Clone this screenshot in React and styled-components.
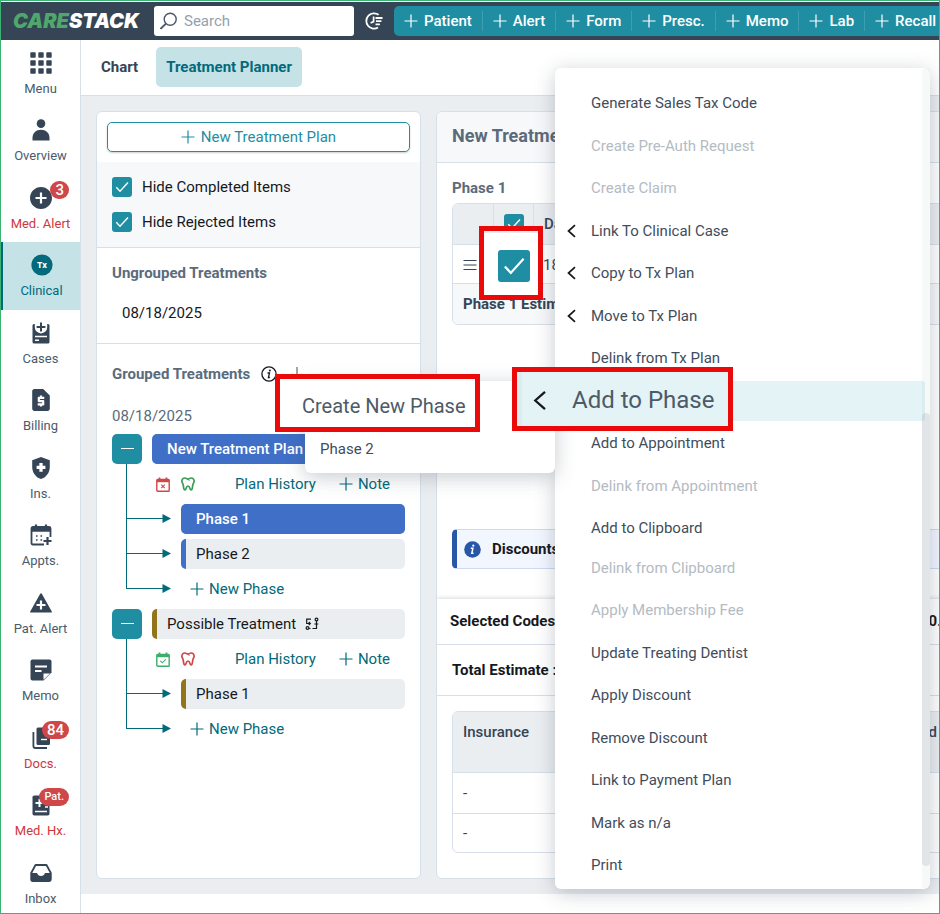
import React from 'react';
import styled, { createGlobalStyle, css } from 'styled-components';
import { MdAddCircle, MdRequestPage, MdHealthAndSafety } from 'react-icons/md';

const GlobalStyle = createGlobalStyle`
  * {
    box-sizing: border-box;
  }

  body {
    margin: 0;
    font-family: Roboto, 'Liberation Sans', sans-serif;
    font-size: 15px;
    line-height: 20px;
    color: #354556;
    background: #fff;
  }

  button, input {
    font: inherit;
    color: inherit;
  }

  button {
    background: none;
    border: none;
    padding: 0;
    cursor: pointer;
  }

  ul {
    list-style: none;
    margin: 0;
    padding: 0;
  }

  svg {
    display: block;
    flex: none;
  }
`;

const Page = styled.div`
  position: relative;
  display: flex;
  flex-direction: column;
  height: 100vh;
  padding-top: 1px;
  border: 1px solid #3cb371;
  overflow: hidden;
`;

/* ---------- top bar ---------- */

const TopBar = styled.header`
  display: flex;
  align-items: center;
  flex: none;
  height: 38px;
  padding-left: 12px;
  background: #354556;
`;

const Logo = styled.a`
  width: 141px;
  font-family: Inter, sans-serif;
  font-size: 20px;
  font-weight: 900;
  font-style: italic;
  color: #fff;
  text-decoration: none;

  span {
    color: #4fa76b;
  }
`;

const SearchBox = styled.label`
  display: flex;
  align-items: center;
  gap: 7px;
  width: 200px;
  height: 30px;
  padding: 0 6px;
  background: #fff;
  border-radius: 3px;
  color: #4b5a69;

  input {
    flex: 1;
    min-width: 0;
    border: none;
    outline: none;
    padding: 0;
    background: none;
  }

  input::placeholder {
    color: #93a1ae;
    opacity: 1;
  }
`;

const ClockButton = styled.button`
  margin: 0 11px;
  color: #fff;
`;

const QuickActions = styled.nav`
  display: flex;
  align-items: center;
  flex: 1;
  min-width: 0;
  height: 30px;
  background: #1f8ea3;
  border-radius: 5px 0 0 5px;
  overflow: hidden;
`;

const QuickAction = styled.button`
  display: flex;
  align-items: center;
  gap: 6px;
  flex: none;
  height: 20px;
  padding: 0 10px;
  color: #fff;
  font-weight: 500;

  & + & {
    border-left: 1px solid #3f9fb1;
  }
`;

/* ---------- sidebar ---------- */

const Body = styled.div`
  display: flex;
  flex: 1;
  min-height: 0;
`;

const Sidebar = styled.nav`
  flex: none;
  width: 80px;
  border-right: 1px solid #d7dfe8;
  overflow: hidden;
`;

const NavItem = styled.li`
  position: relative;
  height: 67px;

  &:nth-child(even) {
    height: 68px;
  }
`;

const NavLink = styled.a`
  display: flex;
  flex-direction: column;
  align-items: center;
  gap: 7px;
  height: 100%;
  padding-top: 12px;
  font-size: 13px;
  font-weight: 400;
  line-height: 16px;
  text-decoration: none;
  color: ${({ $alert }) => ($alert ? '#d0373b' : '#4b5b6c')};

  svg {
    color: #354556;
  }

  ${({ $active }) => $active && css`
    background: #c5e2e7;
    border-left: 2px solid #026a7a;
    color: #026a7a;

    svg {
      color: #026a7a;
    }
  `}
`;

const Badge = styled.span`
  position: absolute;
  top: 6px;
  right: 11px;
  min-width: 18px;
  height: 18px;
  padding: 0 5px;
  border-radius: 9px;
  background: #d0474a;
  color: #fff;
  font-size: ${({ $small }) => ($small ? '11px' : '15px')};
  font-weight: 500;
  line-height: 18px;
  text-align: center;
`;

/* ---------- main area ---------- */

const Main = styled.main`
  display: flex;
  flex-direction: column;
  flex: 1;
  min-width: 0;
  padding-bottom: 19px;
`;

const Tabs = styled.div`
  display: flex;
  gap: 8px;
  flex: none;
  padding: 7px 10px 8px;
  border-bottom: 1px solid #d7dfe8;
`;

const Tab = styled.button`
  height: 40px;
  padding: 0 10px;
  border-radius: 5px;
  font-weight: 700;
  color: ${({ $active }) => ($active ? '#026a7a' : '#354556')};
  background: ${({ $active }) => ($active ? '#c5e2e7' : 'none')};
`;

const Workspace = styled.div`
  display: flex;
  gap: 15px;
  flex: 1;
  min-height: 0;
  padding: 15px 0 15px 15px;
  background: #ebeef1;
  overflow: hidden;
`;

const Card = styled.section`
  display: flex;
  flex-direction: column;
  flex: ${({ $wide }) => ($wide ? '1 0 600px' : '0 0 325px')};
  background: #fff;
  border: 1px solid #d7dfe8;
  border-radius: 6px;
  overflow: hidden;
`;

const NewPlanBar = styled.div`
  padding: 10px;
`;

const NewPlanButton = styled.button`
  display: flex;
  align-items: center;
  justify-content: center;
  gap: 6px;
  width: 100%;
  height: 30px;
  border: 1px solid #1f8ea3;
  border-radius: 5px;
  color: #1f8ea3;
  box-shadow: 0 1px 2px rgba(0, 0, 0, 0.2);
`;

const Filters = styled.div`
  display: flex;
  flex-direction: column;
  gap: 15px;
  padding: 15px;
  background: #f7f8fa;
  border-bottom: 1px solid #d7dfe8;
`;

const FilterLabel = styled.label`
  display: flex;
  gap: 10px;
  color: #15191d;
`;

const CheckWrap = styled.span`
  display: grid;
  width: ${({ $size }) => $size}px;
  height: ${({ $size }) => $size}px;

  input, svg {
    grid-area: 1 / 1;
    width: 100%;
    height: 100%;
    margin: 0;
  }

  input {
    appearance: none;
    border-radius: 3px;
    background: #1f8ea3;
  }

  svg {
    pointer-events: none;
    color: #fff;
  }
`;

const Ungrouped = styled.div`
  display: flex;
  flex-direction: column;
  gap: 20px;
  padding: 15px 15px 20px;
  border-bottom: 1px solid #d7dfe8;
`;

const Heading = styled.h2`
  display: flex;
  align-items: center;
  margin: 0;
  font-size: 15px;
  font-weight: 700;
  line-height: 20px;
  color: #5b6b7c;
`;

const HeadingIcon = styled.span`
  margin-left: 11px;
  color: #15191d;
`;

const PlanDate = styled.div`
  padding-left: 10px;
  color: #15191d;
`;

const Grouped = styled.div`
  padding: 20px 15px;
`;

const GroupDate = styled.div`
  margin: 22px 0 8px;
  color: #5b6b7c;
`;

/* ---------- plan tree ---------- */

const Plan = styled.div`
  margin-bottom: 5px;
  color: #026a7a;
`;

const PlanHead = styled.div`
  display: flex;
  gap: 10px;
`;

const Toggle = styled.button`
  display: grid;
  place-items: center;
  width: 30px;
  height: 30px;
  border-radius: 5px;
  background: #1f8ea3;
  color: #fff;
`;

const colors = { blue: '#3f6fc7', gold: '#92741b' };

const Bar = styled.button`
  display: flex;
  align-items: center;
  gap: 9px;
  flex: 1;
  height: 30px;
  padding-left: 10px;
  border-left: 5px solid ${({ $tone }) => colors[$tone]};
  border-radius: 5px;
  background: ${({ $tone, $selected }) => ($selected ? colors[$tone] : '#ebeef1')};
  color: ${({ $selected }) => ($selected ? '#fff' : '#15191d')};
  font-weight: ${({ $selected }) => ($selected ? 500 : 400)};
`;

const TreeRow = styled.div`
  display: flex;
  height: 35px;

  > svg:first-child {
    margin-right: ${({ $tools }) => ($tools ? '-25px' : '0')};
  }
`;

const RowBody = styled.div`
  display: flex;
  align-items: center;
  flex: 1;
  padding-top: 5px;
`;

const Tools = styled(RowBody)`
  gap: 11px;
  padding-right: 15px;
`;

const TextButton = styled.button`
  display: flex;
  align-items: center;
  gap: 5px;
  color: #026a7a;
  margin-left: ${({ $push }) => ($push ? 'auto' : '0')};
`;

const NoteButton = styled(TextButton)`
  margin-left: 12px;
`;

const NewPhaseButton = styled(TextButton)`
  margin-left: 9px;
`;

/* ---------- plan details ---------- */

const CardTitle = styled.h1`
  flex: none;
  margin: 0;
  padding: 13px 15px 16px;
  border-bottom: 1px solid #d7dfe8;
  background: #f7f8fa;
  font-size: 18px;
  font-weight: 700;
  line-height: 21px;
  color: #5b6b7c;
`;

const PhaseArea = styled.div`
  flex: 1;
  padding: 15px;

  ${Heading} {
    margin-bottom: 5px;
  }
`;

const TableFrame = styled.div`
  border: 1px solid #d7dfe8;
  border-radius: 6px;
  overflow: hidden;
`;

const Table = styled.table`
  width: 100%;
  table-layout: fixed;
  border-spacing: 0;

  th, td {
    padding: 0 10px;
    text-align: left;
    font-weight: 400;
    color: #354556;
  }

  thead th {
    background: #ebeef1;
    font-weight: 500;
  }

  tr:not(:last-child) > *, thead th {
    border-bottom: 1px solid #d7dfe8;
  }
`;

const PhaseTable = styled(Table)`
  thead th {
    height: 41px;
  }

  thead th + th {
    border-left: 1px solid #d7dfe8;
  }

  tbody td {
    height: 39px;
    padding-top: 2px;
    border-bottom: 1px solid #d7dfe8;
  }

  tfoot th {
    height: 40px;
    background: #f7f8fa;
    font-weight: 700;
  }
`;

const InsuranceTable = styled(Table)`
  thead th {
    height: 61px;
    padding-top: 10px;
    vertical-align: top;
  }

  tbody td {
    height: 41px;
  }

  tbody tr:last-child td {
    height: 38px;
  }
`;

const IconCol = styled.col`
  width: 40px;
`;

const InsuranceCol = styled.col`
  width: 440px;
`;

const Notice = styled.div`
  display: flex;
  align-items: center;
  gap: 11px;
  flex: none;
  height: 40px;
  margin: 0 15px 30px;
  padding-left: 7px;
  border: 1px solid #cddaf2;
  border-left: 5px solid #2857a8;
  border-radius: 5px;
  background: #f2f6ff;
  color: #15191d;
  font-weight: 700;
`;

const Totals = styled.div`
  flex: none;
  box-shadow: 0 -1px 4px rgba(53, 69, 86, 0.2);
`;

const TotalRow = styled.div`
  display: flex;
  align-items: center;
  height: ${({ $tall }) => ($tall ? '51px' : '46px')};
  padding: ${({ $tall }) => ($tall ? '0 0 0 15px' : '0 0 2px 13px')};
  border-bottom: 1px solid #d7dfe8;
  font-weight: 700;
  color: #15191d;
`;

const TotalLabel = styled.span`
  flex: 0 0 470px;
`;

const TotalsTable = styled.div`
  padding: 15px 15px 25px;
`;

/* ---------- context menu ---------- */

const floating = css`
  position: absolute;
  background: #fff;
  border-radius: 6px;
  box-shadow: 0 4px 20px rgba(53, 69, 86, 0.28);
`;

const ContextMenu = styled.div`
  ${floating}
  top: 67px;
  left: 554px;
  width: 375px;
  padding: 15px 5px 1px;
`;

const MenuRow = styled.li`
  position: relative;
  margin-bottom: 2px;

  &:nth-child(odd) {
    margin-bottom: ${({ $tight }) => ($tight ? '0' : '3px')};
  }
`;

const MenuItem = styled.button`
  display: grid;
  grid-template-columns: 24px 1fr;
  align-items: center;
  width: 100%;
  height: 40px;
  padding-left: 7px;
  border-radius: 3px;
  text-align: left;
  color: #3f4d5c;
  background: ${({ $active }) => ($active ? '#e3f3f6' : 'none')};

  &:disabled {
    color: #b4bbc2;
  }

  svg {
    color: #15191d;
  }
`;

const MenuText = styled.span`
  grid-column: 2;
`;

const ScrollTrack = styled.div`
  position: absolute;
  top: 0;
  right: 0;
  bottom: 0;
  width: 8px;
  padding-top: 345px;
  border-radius: 4px;
  background: rgba(53, 69, 86, 0.04);
`;

const ScrollThumb = styled.div`
  height: 453px;
  border-radius: 4px;
  background: rgba(53, 69, 86, 0.1);
`;

const SubMenu = styled.ul`
  ${floating}
  top: 0;
  right: 100%;
  display: flex;
  flex-direction: column;
  gap: 3px;
  width: 250px;
  margin-right: 5px;
  padding: 5px 0 4px;
`;

const SubItem = styled.button`
  display: block;
  width: 100%;
  height: 40px;
  padding-left: 15px;
  text-align: left;
  color: #3f4d5c;
`;

/* ---------- highlights ---------- */

const Highlight = styled.span`
  position: absolute;
  display: flex;
  align-items: center;
  border: 5px solid #ea0a0a;
  background: #fff;
  color: #4d5a67;
  white-space: nowrap;
`;

const CheckHighlight = styled(Highlight)`
  top: 225px;
  left: 478px;
  width: 64px;
  height: 74px;
  padding: 5px 0 0 14px;
  box-shadow: inset 0 2px 0 #ebeef1;
`;

const SubHighlight = styled(Highlight)`
  top: -7px;
  left: -30px;
  width: 205px;
  height: 58px;
  padding: 6px 0 0 22px;
  font-size: 20px;
  line-height: 24px;
`;

const ItemHighlight = styled(Highlight)`
  top: -14px;
  left: -48px;
  width: 221px;
  height: 64px;
  gap: 24px;
  padding: 2px 0 0 16px;
  background: #e3f3f6;
  box-shadow: inset 5px 0 0 #dcecef;
  font-size: 24px;
  line-height: 28px;
`;

/* ---------- icons ---------- */

const Plus = ({ size = 14 }) => (
  <svg width={size} height={size} viewBox="0 0 14 14" fill="none" stroke="currentColor" strokeWidth="1.2">
    <path d="M7 .5v13M.5 7h13" />
  </svg>
);

const Chevron = ({ w = 10, h = 14, stroke = 1.7 }) => (
  <svg width={w} height={h} viewBox="0 0 10 14" fill="none" stroke="currentColor" strokeWidth={stroke}>
    <path d="M8 1.2 1.5 7 8 12.8" />
  </svg>
);

const SearchIcon = () => (
  <svg width="17" height="18" viewBox="0 0 17 18" fill="none" stroke="currentColor" strokeWidth="1.4">
    <circle cx="10.2" cy="7.2" r="6" />
    <path d="m6 11.6-5.4 5.2" strokeWidth="1.9" />
  </svg>
);

const FastClock = () => (
  <svg width="18" height="18" viewBox="0 0 18 18" fill="none" stroke="currentColor">
    <path d="M13.6 2.8A7.7 7.7 0 1 0 13 15.6" strokeWidth="1.8" />
    <path d="M8.6 4.500v5.100L5.600 11" strokeWidth="1.7" />
    <path d="M10.5 6h7M11 9.2h5.4M10.500 12.300h4.400" strokeWidth="1.8" />
  </svg>
);

const MenuIcon = () => (
  <svg width="22" height="22" viewBox="0 0 22 22" fill="currentColor">
    {[0, 8, 16].map((y) => [0, 8, 16].map((x) => <rect key={`${x}-${y}`} x={x + 0.3} y={y + 0.3} width="5.4" height="5.4" rx=".8" />))}
  </svg>
);

const PersonIcon = () => (
  <svg width="22" height="22" viewBox="0 0 22 22" fill="currentColor">
    <circle cx="11" cy="4.600" r="4.300" />
    <path d="M2.500 21.500v-2.600c0-5 3.600-8.200 8.500-8.200s8.500 3.200 8.500 8.200v2.600z" />
  </svg>
);

const TxIcon = () => (
  <svg width="22" height="22" viewBox="0 0 22 22">
    <circle cx="11" cy="11" r="10.6" fill="currentColor" />
    <text x="11" y="14" textAnchor="middle" fill="#fff" fontFamily="Inter" fontSize="8" fontWeight="800">Tx</text>
  </svg>
);

const CasesIcon = () => (
  <svg width="22" height="22" viewBox="0 0 22 22">
    <path fill="currentColor" d="M4 2h14q1.5 0 1.5 1.5V20q0 1.5-1.5 1.5H4q-1.5 0-1.5-1.500V3.500Q2.500 2 4 2z" />
    <path fill="#fff" d="M4.800 0h12.400v5.200a6.200 6.200 0 0 1-12.400 0z" />
    <path stroke="currentColor" strokeWidth="2" d="M11 .6v9M6.600 5h8.800" />
    <path stroke="#fff" strokeWidth="1.400" d="M5 14.500h12M5 18.300h4" />
  </svg>
);

const CalendarIcon = () => (
  <svg width="22" height="22" viewBox="0 0 22 22" fill="none" stroke="currentColor">
    <path d="M14 20.500H3q-1.500 0-1.500-1.500V4.500Q1.500 3 3 3h16q1.500 0 1.500 1.500V13" strokeWidth="1.8" />
    <path d="M1.500 5.500h19" strokeWidth="4.500" />
    <path d="M6 .4v4M16 .4v4" strokeWidth="2.2" />
    <path d="M6 12h1.600M10.500 12h1.600M6 16h1.600M10.500 16h1.600" strokeWidth="1.6" />
    <path d="M17.500 13v8M13.500 17h8" strokeWidth="2.2" />
  </svg>
);

const TriangleIcon = () => (
  <svg width="22" height="22" viewBox="0 0 22 22">
    <path fill="currentColor" d="M10.200 1.800q.8-1.200 1.600 0l10 17.800q.3.900-.7.900H.900q-1 0-.7-.9z" />
    <path stroke="#fff" strokeWidth="2.2" d="M11 8.500v9M6.500 13h9" />
  </svg>
);

const MemoIcon = () => (
  <svg width="22" height="22" viewBox="0 0 22 22">
    <path fill="currentColor" d="M2.500.5h17q2 0 2 2v11l-8 8h-11q-2 0-2-2v-17q0-2 2-2z" />
    <path fill="#fff" d="M13.500 14.500H20l-6.500 6.200z" />
    <path stroke="#fff" strokeWidth="1.8" d="M5 7.500h12M5 12h6.500" />
  </svg>
);

const DocsIcon = () => (
  <svg width="22" height="22" viewBox="0 0 22 22">
    <path fill="none" stroke="currentColor" strokeWidth="1.8" d="M3.400 5v14q0 2 2 2H17" />
    <path fill="currentColor" d="M8 .5h8l4 4v12q0 1.500-1.500 1.500H8q-1.500 0-1.500-1.500V2Q6.500.5 8 .5z" />
    <path stroke="#fff" strokeWidth="1.4" d="M11 12.500h6" />
  </svg>
);

const HistoryIcon = () => (
  <svg width="22" height="22" viewBox="0 0 22 22">
    <rect x="2.500" y="1.500" width="17" height="20" rx="1.8" fill="currentColor" />
    <path stroke="#fff" strokeWidth="2" d="M9.500 5v8M5.500 9h8" />
    <path stroke="#fff" strokeWidth="1.3" d="M15 13h3M5 17.500h12M15 10h3" />
  </svg>
);

const InboxIcon = () => (
  <svg width="22" height="22" viewBox="0 0 22 22" fill="none">
    <path stroke="currentColor" strokeWidth="1.8" strokeLinejoin="round" d="M1.200 11 5.500 3h11l4.300 8v6.500q0 1.500-1.500 1.500H2.700q-1.500 0-1.500-1.500z" />
    <path fill="currentColor" d="M1.200 11H7q1 3 4 3t4-3h5.800v6.500q0 1.500-1.500 1.500H2.700q-1.500 0-1.500-1.500z" />
  </svg>
);

const InfoOutline = () => (
  <svg width="16" height="16" viewBox="0 0 16 16">
    <circle cx="8" cy="8" r="7.1" fill="none" stroke="currentColor" strokeWidth="1.3" />
    <circle cx="8.8" cy="4.5" r="1" fill="currentColor" />
    <path d="M6.500 7h2l-1.100 4.500h1.500" fill="none" stroke="currentColor" strokeWidth="1.3" />
  </svg>
);

const InfoSolid = () => (
  <svg width="17" height="17" viewBox="0 0 17 17">
    <circle cx="8.5" cy="8.5" r="8.3" fill="#2857a8" />
    <circle cx="9.3" cy="4.7" r="1.1" fill="#fff" />
    <path d="M6.800 7.300h2.100l-1.100 4.900h1.700" fill="none" stroke="#fff" strokeWidth="1.5" />
  </svg>
);

const DownArrow = () => (
  <svg width="18" height="14" viewBox="-2 0 18 14" fill="none" stroke="#5b6b7c" strokeWidth="1.2">
    <path d="M7 0v13M2 7l5 6 5-6" />
  </svg>
);

const PlanCalendar = ({ ok }) => (
  <svg width="14" height="15" viewBox="0 0 14 15" fill="none" stroke={ok ? '#3fae6c' : '#d0474a'}>
    <rect x=".8" y="2.5" width="12.4" height="11.7" rx=".8" strokeWidth="1.4" />
    <path d="M.8 4h12.400" strokeWidth="2.4" />
    <path d="M3.500.5v2M10.500.5v2" strokeWidth="1.8" />
    <path d={ok ? 'M4.300 8.800l2 2 3.500-3.500' : 'M5.200 7.600l3.600 3.600M8.800 7.600l-3.600 3.600'} strokeWidth="1.1" />
  </svg>
);

const Tooth = ({ color }) => (
  <svg width="14" height="14" viewBox="0 0 14 14" fill="none" stroke={color} strokeWidth="1.7" strokeLinejoin="round">
    <path d="M4 1C1.800 1 .8 2.600.9 4.300c.1 1.700 1.200 2.400 1.400 4 .2 1.700.2 4.700 1.700 4.700 1.400 0 .8-4 3-4s1.600 4 3 4c1.500 0 1.500-3 1.700-4.700.2-1.600 1.300-2.300 1.400-4C13.200 2.600 12.200 1 10 1 8.800 1 8 2.200 7 2.200S5.200 1 4 1z" />
    <path d="m5.500 1.500 3 2" strokeWidth="1" />
  </svg>
);

const SwapIcon = () => (
  <svg width="14" height="14" viewBox="0 0 14 14" fill="none" stroke="currentColor" strokeWidth="1.2">
    <path d="M6 2.200H1.700v4.300H5M3.800 5l1.500 1.500L3.800 8" />
    <circle cx="2.500" cy="11" r="1.400" />
    <path d="M4 11.500h1.500" />
    <circle cx="11.500" cy="2.500" r="1.400" />
    <path d="M11.500 4v7.500H7.500M9.300 7h4" />
  </svg>
);

const Burger = () => (
  <svg width="14" height="12" viewBox="0 0 14 12" stroke="currentColor" strokeWidth="1.2">
    <path d="M.5 1.500h13M.5 6h13M.5 10.500h13" />
  </svg>
);

// connector from the toggle down to a tree row
const Branch = ({ arrow, last }) => (
  <svg width="69" height="35" viewBox="0 0 69 35" stroke="currentColor" fill="currentColor">
    <path d={last ? 'M14.500 0v20' : 'M14.500 0v35'} />
    {arrow && <path d="M14 19.500h38" />}
    {arrow && <path d="M50.500 15v9l8.500-4.500z" stroke="none" />}
  </svg>
);

const Checkbox = ({ size = 20, label }) => (
  <CheckWrap $size={size}>
    <input type="checkbox" defaultChecked aria-label={label} />
    <svg viewBox="0 0 20 20" fill="none" stroke="currentColor" strokeWidth="1.4">
      <path d="m4.300 10.300 3.700 4L16 5.500" />
    </svg>
  </CheckWrap>
);

/* ---------- data ---------- */

const quickActions = ['Patient', 'Alert', 'Form', 'Presc.', 'Memo', 'Lab', 'Recall'];

const navItems = [
  { label: 'Menu', icon: <MenuIcon /> },
  { label: 'Overview', icon: <PersonIcon /> },
  { label: 'Med. Alert', icon: <MdAddCircle size={22} viewBox="2 2 20 20" />, badge: '3', alert: true },
  { label: 'Clinical', icon: <TxIcon />, active: true },
  { label: 'Cases', icon: <CasesIcon /> },
  { label: 'Billing', icon: <MdRequestPage size={22} viewBox="2 2 20 20" /> },
  { label: 'Ins.', icon: <MdHealthAndSafety size={22} viewBox="2 2 20 20" /> },
  { label: 'Appts.', icon: <CalendarIcon /> },
  { label: 'Pat. Alert', icon: <TriangleIcon /> },
  { label: 'Memo', icon: <MemoIcon /> },
  { label: 'Docs.', icon: <DocsIcon />, badge: '84', alert: true },
  { label: 'Med. Hx.', icon: <HistoryIcon />, badge: 'Pat.', alert: true },
  { label: 'Inbox', icon: <InboxIcon /> },
];

const menuItems = [
  { label: 'Generate Sales Tax Code' },
  { label: 'Create Pre-Auth Request', disabled: true },
  { label: 'Create Claim', disabled: true },
  { label: 'Link To Clinical Case', nested: true },
  { label: 'Copy to Tx Plan', nested: true },
  { label: 'Move to Tx Plan', nested: true },
  { label: 'Delink from Tx Plan' },
  { label: 'Add to Phase', nested: true, open: true },
  { label: 'Add to Appointment' },
  { label: 'Delink from Appointment', disabled: true },
  { label: 'Add to Clipboard', tight: true },
  { label: 'Delink from Clipboard', disabled: true },
  { label: 'Apply Membership Fee', disabled: true },
  { label: 'Update Treating Dentist' },
  { label: 'Apply Discount' },
  { label: 'Remove Discount' },
  { label: 'Link to Payment Plan' },
  { label: 'Mark as n/a' },
  { label: 'Print' },
];

const plans = [
  {
    name: 'New Treatment Plan',
    tone: 'blue',
    selected: true,
    phases: [{ name: 'Phase 1', selected: true }, { name: 'Phase 2' }],
  },
  {
    name: 'Possible Treatment',
    tone: 'gold',
    ok: true,
    swap: true,
    phases: [{ name: 'Phase 1' }],
  },
];

const PlanTree = ({ plan }) => (
  <Plan>
    <PlanHead>
      <Toggle aria-label={`Collapse ${plan.name}`}>
        <svg width="13" height="2" viewBox="0 0 13 2"><path d="M0 .5h13" stroke="currentColor" /></svg>
      </Toggle>
      <Bar $tone={plan.tone} $selected={plan.selected}>
        {plan.name}
        {plan.swap && <SwapIcon />}
      </Bar>
    </PlanHead>
    <TreeRow $tools>
      <Branch />
      <Tools>
        <PlanCalendar ok={plan.ok} />
        <Tooth color={plan.ok ? '#d0474a' : '#3a9d55'} />
        <TextButton $push>Plan History</TextButton>
        <NoteButton><Plus />Note</NoteButton>
      </Tools>
    </TreeRow>
    {plan.phases.map((phase) => (
      <TreeRow key={phase.name}>
        <Branch arrow />
        <RowBody>
          <Bar $tone={plan.tone} $selected={phase.selected}>{phase.name}</Bar>
        </RowBody>
      </TreeRow>
    ))}
    <TreeRow>
      <Branch arrow last />
      <RowBody>
        <NewPhaseButton><Plus />New Phase</NewPhaseButton>
      </RowBody>
    </TreeRow>
  </Plan>
);

const PlanDetails = () => (
  <Card $wide>
    <CardTitle>New Treatment Plan</CardTitle>
    <PhaseArea>
      <Heading>Phase 1</Heading>
      <TableFrame>
        <PhaseTable>
          <colgroup><IconCol /><IconCol /><col /></colgroup>
          <thead>
            <tr>
              <th />
              <th><Checkbox label="Select all" /></th>
              <th>Date</th>
            </tr>
          </thead>
          <tbody>
            <tr>
              <td><Burger /></td>
              <td />
              <td>18 Aug</td>
            </tr>
          </tbody>
          <tfoot>
            <tr><th colSpan={3}>Phase 1 Estimate</th></tr>
          </tfoot>
        </PhaseTable>
      </TableFrame>
    </PhaseArea>
    <Notice><InfoSolid />Discounts</Notice>
    <Totals>
      <TotalRow><TotalLabel>Selected Codes</TotalLabel>$0.00</TotalRow>
      <TotalRow $tall><TotalLabel>Total Estimate :</TotalLabel></TotalRow>
      <TotalsTable>
        <TableFrame>
          <InsuranceTable>
            <colgroup><InsuranceCol /><col /></colgroup>
            <thead><tr><th>Insurance</th><th>Used</th></tr></thead>
            <tbody>
              <tr><td>-</td><td /></tr>
              <tr><td>-</td><td /></tr>
            </tbody>
          </InsuranceTable>
        </TableFrame>
      </TotalsTable>
    </Totals>
  </Card>
);

const App = () => (
  <>
    <GlobalStyle />
    <Page>
      <TopBar>
        <Logo href="#"><span>CARE</span>STACK</Logo>
        <SearchBox>
          <SearchIcon />
          <input type="text" placeholder="Search" aria-label="Search" />
        </SearchBox>
        <ClockButton aria-label="Recent"><FastClock /></ClockButton>
        <QuickActions>
          {quickActions.map((name) => (
            <QuickAction key={name}><Plus />{name}</QuickAction>
          ))}
        </QuickActions>
      </TopBar>

      <Body>
        <Sidebar>
          <ul>
            {navItems.map((item) => (
              <NavItem key={item.label}>
                <NavLink href="#" $active={item.active} $alert={item.alert}>
                  {item.icon}
                  {item.label}
                </NavLink>
                {item.badge && <Badge $small={item.badge === 'Pat.'}>{item.badge}</Badge>}
              </NavItem>
            ))}
          </ul>
        </Sidebar>

        <Main>
          <Tabs>
            <Tab>Chart</Tab>
            <Tab $active>Treatment Planner</Tab>
          </Tabs>
          <Workspace>
            <Card>
              <NewPlanBar>
                <NewPlanButton><Plus />New Treatment Plan</NewPlanButton>
              </NewPlanBar>
              <Filters>
                <FilterLabel><Checkbox />Hide Completed Items</FilterLabel>
                <FilterLabel><Checkbox />Hide Rejected Items</FilterLabel>
              </Filters>
              <Ungrouped>
                <Heading>Ungrouped Treatments</Heading>
                <PlanDate>08/18/2025</PlanDate>
              </Ungrouped>
              <Grouped>
                <Heading>
                  Grouped Treatments
                  <HeadingIcon><InfoOutline /></HeadingIcon>
                  <HeadingIcon><DownArrow /></HeadingIcon>
                </Heading>
                <GroupDate>08/18/2025</GroupDate>
                {plans.map((plan) => <PlanTree key={plan.name} plan={plan} />)}
              </Grouped>
            </Card>
            <PlanDetails />
          </Workspace>
        </Main>
      </Body>

      <CheckHighlight><Checkbox size={32} label="Select row" /></CheckHighlight>

      <ContextMenu>
        <ul>
          {menuItems.map((item) => (
            <MenuRow key={item.label} $tight={item.tight}>
              {item.open && (
                <SubMenu>
                  <li>
                    <SubItem><SubHighlight>Create New Phase</SubHighlight></SubItem>
                  </li>
                  <li><SubItem>Phase 2</SubItem></li>
                </SubMenu>
              )}
              <MenuItem disabled={item.disabled} $active={item.open}>
                {item.open ? (
                  <ItemHighlight>
                    <Chevron w={15} h={21} stroke={1.5} />
                    {item.label}
                  </ItemHighlight>
                ) : (
                  <>
                    {item.nested && <Chevron />}
                    <MenuText>{item.label}</MenuText>
                  </>
                )}
              </MenuItem>
            </MenuRow>
          ))}
        </ul>
        <ScrollTrack><ScrollThumb /></ScrollTrack>
      </ContextMenu>
    </Page>
  </>
);

export default App;
